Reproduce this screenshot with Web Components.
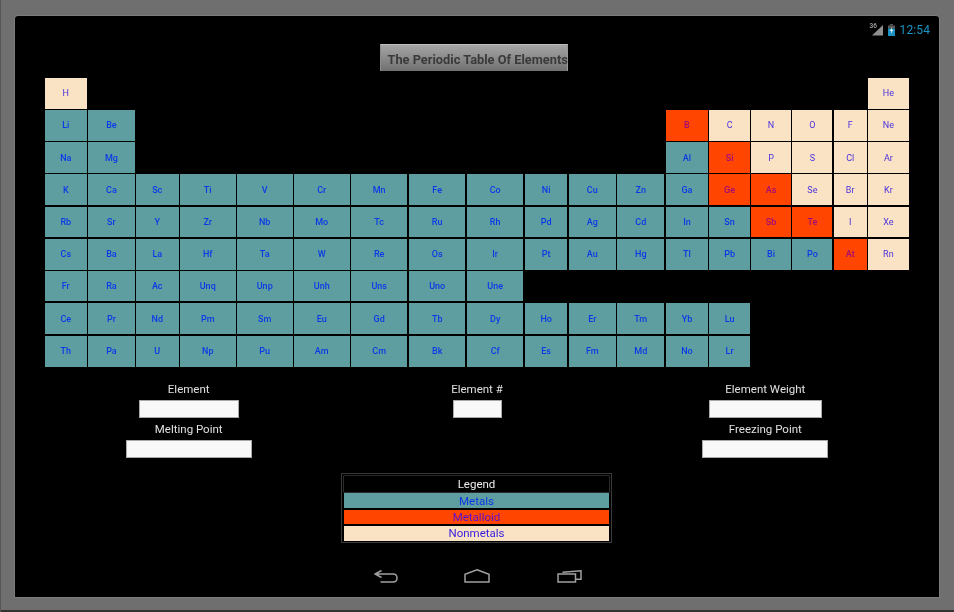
<!DOCTYPE html>
<html>
<head>
<meta charset="utf-8">
<title>The Periodic Table Of Elements</title>
<style>
  html, body { margin: 0; padding: 0; background: #6f6f6f; overflow: hidden; }
  body { font-family: "Roboto", "Liberation Sans", sans-serif; }
</style>
</head>
<body>
<device-frame>
  <status-bar time="12:54"></status-bar>
  <title-button>The Periodic Table Of Elements</title-button>
  <periodic-table></periodic-table>
  <field-panel>
    <div>
      <data-field label="Element" width="100"></data-field>
      <data-field label="Melting Point" width="126"></data-field>
    </div>
    <div>
      <data-field label="Element #" width="49"></data-field>
    </div>
    <div>
      <data-field label="Element Weight" width="113"></data-field>
      <data-field label="Freezing Point" width="126"></data-field>
    </div>
  </field-panel>
  <element-legend></element-legend>
  <nav-bar></nav-bar>
</device-frame>

<script>
class DeviceFrame extends HTMLElement {
  constructor() {
    super();
    this.attachShadow({ mode: "open" });
  }
  connectedCallback() {
    this.shadowRoot.innerHTML = `
      <style>
        :host {
          display: block;
          width: 954px;
          height: 612px;
          box-sizing: border-box;
          padding: 16px 15px 14.7px 15px;
          background: #6f6f6f;
          box-shadow: inset 1px 0 0 #555, inset 0 -2px 0 #333;
        }
        .screen {
          height: 100%;
          display: flex;
          flex-direction: column;
          background: #000;
          border-radius: 3px 3px 0 0;
          box-shadow: 0 0 0 0.5px #8a8a8a;
          filter: blur(0.45px);
        }
      </style>
      <div class="screen"><slot></slot></div>
    `;
  }
}

class StatusBar extends HTMLElement {
  constructor() {
    super();
    this.attachShadow({ mode: "open" });
  }
  connectedCallback() {
    this.shadowRoot.innerHTML = `
      <style>
        :host {
          display: flex;
          justify-content: flex-end;
          align-items: center;
          height: 28px;
          padding-right: 9px;
          box-sizing: border-box;
          flex: none;
        }
        .signal { position: relative; width: 13px; height: 12px; margin-right: 4px; }
        .signal svg { display: block; }
        .signal span {
          position: absolute; left: -1px; top: -1px;
          font: 500 6.5px/7px "Roboto", sans-serif; color: #aaa;
        }
        .battery { display: block; margin-right: 5px; }
        .time { font: 12px/14px "Roboto", sans-serif; color: #1c93c2; letter-spacing: 0.1px; }
      </style>
      <div class="signal">
        <svg width="13" height="12" viewBox="0 0 13 12"><path d="M1 11.5 L12 1 V11.5 Z" fill="#8f8f8f"/></svg>
        <span>36</span>
      </div>
      <svg class="battery" width="7" height="12" viewBox="0 0 7 12">
        <rect x="2" y="0" width="3" height="1.5" fill="#555"/>
        <rect x="0" y="1.5" width="7" height="3" fill="#5a5a5a"/>
        <rect x="0" y="4.5" width="7" height="7.5" fill="#1c93c2"/>
        <path d="M4.2 3 L1.8 7 H3.3 L2.8 10 L5.3 5.8 H3.8 Z" fill="#e8f6fb"/>
      </svg>
      <span class="time">${this.getAttribute("time")}</span>
    `;
  }
}

class TitleButton extends HTMLElement {
  constructor() {
    super();
    this.attachShadow({ mode: "open" });
  }
  connectedCallback() {
    this.shadowRoot.innerHTML = `
      <style>
        :host {
          display: flex;
          align-items: center;
          flex: none;
          align-self: flex-start;
          margin-left: 365px;
          width: 188px;
          height: 26.5px;
          box-sizing: border-box;
          padding: 3px 0 0 6.5px;
          white-space: nowrap;
          font: 700 12.8px "Roboto", sans-serif;
          color: #3a3a3a;
          background: linear-gradient(#a5a5a5, #707070);
          border-top: 1px solid #bdbdbd;
          border-right: 1px solid #999;
          border-left: 1px solid #8c8c8c;
        }
      </style>
      <slot></slot>
    `;
  }
}

const COLUMN_STARTS = [44.7, 88.3, 136, 180, 237, 294, 351, 409, 467, 525, 569, 617.3, 666, 709.7, 751.3, 792.7, 834, 868.3, 910.4];
const ROW_STARTS = [77.7, 110, 142.3, 174.3, 206.7, 238.7, 271, 303, 336, 368.3];
const GAP = 1.4;

// row, first column, symbols
const TABLE_ROWS = [
  [1, 1, "H"],
  [1, 18, "He"],
  [2, 1, "Li Be"],
  [2, 13, "B C N O F Ne"],
  [3, 1, "Na Mg"],
  [3, 13, "Al Si P S Cl Ar"],
  [4, 1, "K Ca Sc Ti V Cr Mn Fe Co Ni Cu Zn Ga Ge As Se Br Kr"],
  [5, 1, "Rb Sr Y Zr Nb Mo Tc Ru Rh Pd Ag Cd In Sn Sb Te I Xe"],
  [6, 1, "Cs Ba La Hf Ta W Re Os Ir Pt Au Hg Tl Pb Bi Po At Rn"],
  [7, 1, "Fr Ra Ac Unq Unp Unh Uns Uno Une"],
  [8, 1, "Ce Pr Nd Pm Sm Eu Gd Tb Dy Ho Er Tm Yb Lu"],
  [9, 1, "Th Pa U Np Pu Am Cm Bk Cf Es Fm Md No Lr"],
];
const NONMETALS = "H He C N O F Ne P S Cl Ar Se Br Kr I Xe Rn".split(" ");
const METALLOIDS = "B Si Ge As Sb Te At".split(" ");

function tracks(starts) {
  return starts.slice(1).map((s, i) => (s - starts[i] - GAP).toFixed(1) + "px").join(" ");
}

class PeriodicTable extends HTMLElement {
  constructor() {
    super();
    this.attachShadow({ mode: "open" });
  }
  connectedCallback() {
    let cells = "";
    TABLE_ROWS.forEach(([row, col, symbols]) => {
      symbols.split(" ").forEach((sym, i) => {
        let kind = "metal";
        if (NONMETALS.includes(sym)) kind = "nonmetal";
        if (METALLOIDS.includes(sym)) kind = "metalloid";
        cells += `<div class="cell ${kind}" style="grid-row:${row};grid-column:${col + i}">${sym}</div>`;
      });
    });
    this.shadowRoot.innerHTML = `
      <style>
        :host {
          display: grid;
          flex: none;
          margin: 7.2px 0 0 29.7px;
          gap: ${GAP}px;
          grid-template-columns: ${tracks(COLUMN_STARTS)};
          grid-template-rows: ${tracks(ROW_STARTS)};
          justify-content: start;
          font: 500 9px "Roboto", sans-serif;
        }
        .cell { display: flex; align-items: center; justify-content: center; }
        .metal { background: #5f9ea0; color: #0a3ae8; }
        .metalloid { background: #ff4500; color: #a00c78; }
        .nonmetal { background: #fae3c4; color: #4a30e0; font-weight: 400; }
      </style>
      ${cells}
    `;
  }
}

class FieldPanel extends HTMLElement {
  constructor() {
    super();
    this.attachShadow({ mode: "open" });
  }
  connectedCallback() {
    this.shadowRoot.innerHTML = `
      <style>
        :host {
          display: flex;
          flex: none;
          justify-content: space-between;
          height: 80px;
          margin-top: 11.4px;
          padding: 0 110.7px;
        }
        ::slotted(div) { width: 126px; }
      </style>
      <slot></slot>
    `;
  }
}

class DataField extends HTMLElement {
  constructor() {
    super();
    this.attachShadow({ mode: "open" });
  }
  connectedCallback() {
    this.shadowRoot.innerHTML = `
      <style>
        :host { display: flex; flex-direction: column; align-items: center; }
        label {
          height: 22px;
          font: 11.5px/22px "Roboto", sans-serif;
          color: #e0e0e0;
          white-space: nowrap;
        }
        .box {
          height: 18px;
          box-sizing: border-box;
          background: #f8f8f8;
          border: 1px solid #a8a8a8;
        }
      </style>
      <label>${this.getAttribute("label")}</label>
      <div class="box" style="width:${this.getAttribute("width")}px"></div>
    `;
  }
}

class ElementLegend extends HTMLElement {
  constructor() {
    super();
    this.attachShadow({ mode: "open" });
  }
  connectedCallback() {
    this.shadowRoot.innerHTML = `
      <style>
        :host {
          display: flex;
          flex-direction: column;
          flex: none;
          align-self: flex-start;
          width: 271px;
          height: 70.5px;
          margin: 14.7px 0 0 326px;
          padding: 2px 2.3px 1.7px;
          box-sizing: border-box;
          border: 1px solid #3a3a3a;
          gap: 1.6px;
          font: 11.5px "Roboto", sans-serif;
          text-align: center;
        }
        div { flex: 1; display: flex; align-items: center; justify-content: center; }
        .head { background: #000; color: #eee; box-shadow: 0 0 0 0.5px #555; flex: 1.08; }
        .metals { background: #5f9ea0; color: #0a3ae8; }
        .metalloid { background: #ff4500; color: #5a10d0; }
        .nonmetals { background: #fae3c4; color: #3a20e0; }
      </style>
      <div class="head">Legend</div>
      <div class="metals">Metals</div>
      <div class="metalloid">Metalloid</div>
      <div class="nonmetals">Nonmetals</div>
    `;
  }
}

class NavBar extends HTMLElement {
  constructor() {
    super();
    this.attachShadow({ mode: "open" });
  }
  connectedCallback() {
    this.shadowRoot.innerHTML = `
      <style>
        :host {
          display: flex;
          flex: 1;
          align-items: flex-start;
          padding: 26px 0 0 359px;
          gap: 66px;
        }
        svg { display: block; fill: none; stroke: #a0a0a0; stroke-width: 1.5; }
      </style>
      <svg width="24" height="14" viewBox="0 0 24 14">
        <path d="M7.5 1.5 L1 5 L7.5 8.5 M1.2 5 H19 C21.5 5 23 6.6 23 9 C23 11.4 21.5 13 19 13 H6.5"/>
      </svg>
      <svg width="27" height="14" viewBox="0 0 27 14">
        <path d="M13 .8 L25 5.2 V13 H1 V5.2 Z"/>
      </svg>
      <svg width="25" height="14" viewBox="0 0 25 14">
        <path d="M1 5 H18.5 V13 H1 Z M5.5 3.2 L24 1.8 V10.2 H19"/>
      </svg>
    `;
  }
}

customElements.define("device-frame", DeviceFrame);
customElements.define("status-bar", StatusBar);
customElements.define("title-button", TitleButton);
customElements.define("periodic-table", PeriodicTable);
customElements.define("field-panel", FieldPanel);
customElements.define("data-field", DataField);
customElements.define("element-legend", ElementLegend);
customElements.define("nav-bar", NavBar);
</script>
</body>
</html>
